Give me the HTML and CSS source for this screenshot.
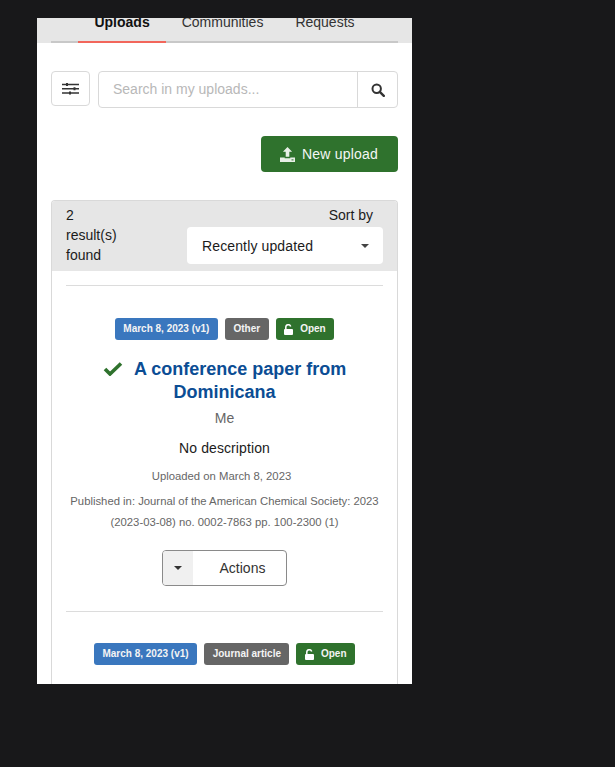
FILE: index.html
```html
<!DOCTYPE html>
<html lang="en">
<head>
<meta charset="utf-8">
<title>My uploads</title>
<link rel="stylesheet" href="styles.css">
</head>
<body>
<main class="panel">
  <div class="tabbar">
    <nav class="tabs">
      <a class="tab active">Uploads</a>
      <a class="tab">Communities</a>
      <a class="tab">Requests</a>
    </nav>
  </div>
  <div class="content">
    <div class="search-row">
      <button class="filter-btn" aria-label="Filters">
        <svg width="17" height="14" viewBox="0 0 17 14"><path d="M0 2.500h17M0 6.800h17M0 11h17" stroke="#333" stroke-width="1.400" fill="none"/><path d="M4 1h2v3H4zM11.500 5.300h2v3h-2zM7 9.500h2v3H7z" fill="#333"/></svg>
      </button>
      <div class="search">
        <span class="search-input">Search in my uploads...</span>
        <span class="search-btn">
          <svg width="14" height="14" viewBox="0 0 14 14"><circle cx="5.700" cy="5.700" r="4.200" fill="none" stroke="#333" stroke-width="2"/><path d="M8.800 8.800l4 4" stroke="#333" stroke-width="2.400" stroke-linecap="round"/></svg>
        </span>
      </div>
    </div>
    <div class="new-row">
      <button class="new-btn">
        <svg width="15" height="15" viewBox="0 0 15 15"><path d="M7.500 0l4.600 4.700H9.300v5H5.700v-5H2.900z" fill="#e8efe7"/><path d="M0 10.500h4.700v.8h5.600v-.8H15V15H0z" fill="#e8efe7"/><path d="M11.500 12.900h2" stroke="#2f722d" stroke-width="1"/></svg>
        New upload
      </button>
    </div>
    <section class="results">
      <header class="results-head">
        <div class="count">2 result(s) found</div>
        <div class="sort">
          <div class="sort-label">Sort by</div>
          <div class="select"><span>Recently updated</span><i class="caret"></i></div>
        </div>
      </header>
      <div class="results-body">
        <article class="item">
          <div class="labels">
            <span class="label blue">March 8, 2023 (v1)</span>
            <span class="label grey">Other</span>
            <span class="label green">
              <svg width="10" height="11" viewBox="0 0 10 11"><path d="M1.800 5V3.200a2.500 2.500 0 0 1 4.900-.700" fill="none" stroke="#fff" stroke-width="1.500"/><rect x="0" y="5" width="9" height="6" rx="1" fill="#fff"/></svg>
              Open
            </span>
          </div>
          <h2 class="title">
            <svg class="check" width="20" height="15" viewBox="0 0 20 15"><path d="M2 8l5 5L18 2.500" fill="none" stroke="#2f722d" stroke-width="3.600"/></svg>
            <a>A conference paper from Dominicana</a>
          </h2>
          <div class="creator">Me</div>
          <p class="desc">No description</p>
          <p class="meta uploaded">Uploaded on March 8, 2023</p>
          <p class="meta pub">Published in: Journal of the American Chemical Society: 2023 (2023-03-08) no. 0002-7863 pp. 100-2300 (1)</p>
          <div class="actions"><span class="actions-caret"><i class="caret dark"></i></span><span class="actions-text">Actions</span></div>
        </article>
        <article class="item">
          <div class="labels">
            <span class="label blue">March 8, 2023 (v1)</span>
            <span class="label grey">Journal article</span>
            <span class="label green">
              <svg width="10" height="11" viewBox="0 0 10 11"><path d="M1.800 5V3.200a2.500 2.500 0 0 1 4.900-.700" fill="none" stroke="#fff" stroke-width="1.500"/><rect x="0" y="5" width="9" height="6" rx="1" fill="#fff"/></svg>
              Open
            </span>
          </div>
        </article>
      </div>
    </section>
  </div>
</main>
</body>
</html>
```
FILE: styles.css
```css
* { box-sizing: border-box; }
html, body { margin: 0; height: 100%; }
body {
  background: #18181a;
  padding: 18px 0 0 37px;
  font-family: "Liberation Sans", Arial, sans-serif;
  font-size: 14px;
  color: #1b1b1b;
}
.panel {
  width: 375px;
  height: 666px;
  background: #fff;
  overflow: hidden;
}
.tabbar {
  background: #e6e6e6;
  height: 25px;
  padding: 0 14px;
}
.tabs {
  display: flex;
  justify-content: center;
  height: 25px;
  border-bottom: 2px solid #c8c8c8;
  align-items: flex-end;
}
.tab {
  padding: 0 16px 11px;
  height: 30px;
  line-height: 18px;
  margin-bottom: -2px;
  border-bottom: 2px solid transparent;
  color: #333;
}
.tab.active { font-weight: 700; color: #111; border-bottom-color: #f2665b; }
.content { padding: 28px 14px 0; }
.search-row { display: flex; gap: 8px; align-items: flex-start; }
.filter-btn {
  width: 39px;
  height: 35px;
  background: #fff;
  border: 1px solid #d9d9d9;
  border-radius: 4px;
  padding: 0;
  display: flex;
  align-items: center;
  justify-content: center;
}
.search {
  flex: 1;
  height: 37px;
  display: flex;
  border: 1px solid #d9d9d9;
  border-radius: 4px;
}
.search-input { flex: 1; padding: 0 14px; line-height: 35px; color: #b8b8b8; }
.search-btn {
  width: 40px;
  border-left: 1px solid #d9d9d9;
  display: flex;
  align-items: center;
  justify-content: center;
}
.new-row { display: flex; justify-content: flex-end; margin-top: 28px; }
.new-btn {
  width: 137px;
  height: 36px;
  background: #2f722d;
  color: #f4f7f4;
  border: 0;
  border-radius: 4px;
  padding: 0 20px 0 19px;
  font: 14px "Liberation Sans", Arial, sans-serif;
  letter-spacing: 0.2px;
  display: flex;
  align-items: center;
  justify-content: flex-start;
  gap: 7px;
}
.results {
  margin-top: 28px;
  border: 1px solid #d9d9d9;
  border-bottom: 0;
  border-radius: 4px 4px 0 0;
}
.results-head {
  background: #e6e6e6;
  height: 70px;
  padding: 4px 14px 0;
  display: flex;
  justify-content: space-between;
  border-radius: 3px 3px 0 0;
}
.count { width: 60px; line-height: 20px; }
.sort { width: 196px; }
.sort-label { text-align: right; padding-right: 10px; line-height: 20px; height: 22px; }
.select {
  height: 37px;
  background: #fff;
  border-radius: 4px;
  display: flex;
  align-items: center;
  justify-content: space-between;
  padding: 0 14px 0 15px;
  letter-spacing: 0.13px;
}
.caret {
  display: block;
  width: 0;
  height: 0;
  border: 4px solid transparent;
  border-top-color: #444;
  border-bottom: 0;
}
.results-body { padding: 14px 14px 0; }
.item { border-top: 1px solid #dcdcdc; padding-top: 32px; text-align: center; }
.item + .item { margin-top: 25px; padding-top: 31px; padding-bottom: 60px; }
.labels { display: flex; justify-content: center; gap: 7px; }
.label {
  height: 21.500px;
  padding: 1px 8.500px 0;
  border-radius: 3px;
  color: #f4f4f4;
  font-size: 10px;
  font-weight: 700;
  line-height: 20px;
  display: flex;
  align-items: center;
  gap: 6px;
}
.blue { background: #3a77be; }
.grey { background: #666; }
.green { background: #2f722d; }
.title {
  margin: 18.500px 0 0;
  font-size: 18px;
  line-height: 23px;
  color: #0b4d94;
  font-weight: 700;
}
.check { vertical-align: -1px; margin-right: 7px; }
.creator { margin-top: 4px; color: #666; line-height: 20px; }
.desc { margin: 10px 0 0; line-height: 20px; letter-spacing: 0.1px; }
.meta { margin: 8px 0 0; font-size: 11.300px; line-height: 21px; color: #666; }
.uploaded { padding-right: 6px; }
.pub { margin-top: 4px; }
.actions {
  margin: 17px auto 0;
  width: 125px;
  height: 36px;
  border: 1px solid #8a8a8a;
  border-radius: 4px;
  display: flex;
  overflow: hidden;
}
.actions-caret {
  width: 30px;
  background: #f0f0f0;
  display: flex;
  align-items: center;
  justify-content: center;
}
.actions-text { flex: 1; line-height: 34px; text-align: center; padding-left: 6px; color: #333; }
.dark { border-top-color: #333; }
```
